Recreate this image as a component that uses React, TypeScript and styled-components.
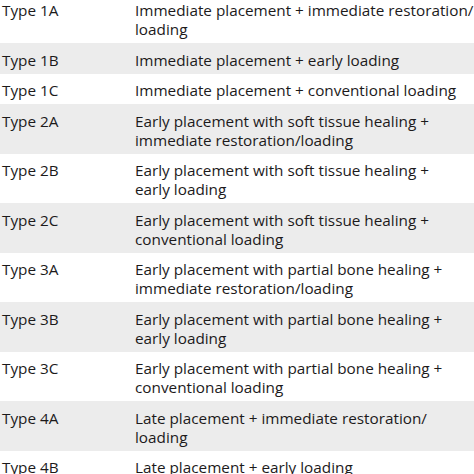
import React from "react";
import styled, { createGlobalStyle } from "styled-components";

const rows: { type: string; lines: string[] }[] = [
  { type: "Type 1A", lines: ["Immediate placement + immediate restoration/", "loading"] },
  { type: "Type 1B", lines: ["Immediate placement + early loading"] },
  { type: "Type 1C", lines: ["Immediate placement + conventional loading"] },
  { type: "Type 2A", lines: ["Early placement with soft tissue healing +", "immediate restoration/loading"] },
  { type: "Type 2B", lines: ["Early placement with soft tissue healing +", "early loading"] },
  { type: "Type 2C", lines: ["Early placement with soft tissue healing +", "conventional loading"] },
  { type: "Type 3A", lines: ["Early placement with partial bone healing +", "immediate restoration/loading"] },
  { type: "Type 3B", lines: ["Early placement with partial bone healing +", "early loading"] },
  { type: "Type 3C", lines: ["Early placement with partial bone healing +", "conventional loading"] },
  { type: "Type 4A", lines: ["Late placement + immediate restoration/", "loading"] },
  { type: "Type 4B", lines: ["Late placement + early loading"] },
];

const App = () => {
  return (
    <>
      <GlobalStyle />
      <Table>
        {rows.map((row, i) => (
          <Row key={row.type} $shaded={i % 2 === 1}>
            <TypeCell>{row.type}</TypeCell>
            <DescCell>
              {row.lines.map((line) => (
                <Line key={line}>{line}</Line>
              ))}
            </DescCell>
          </Row>
        ))}
      </Table>
    </>
  );
};

export default App;

const GlobalStyle = createGlobalStyle`
  html, body {
    margin: 0;
    padding: 0;
    background: #ffffff;
    overflow: hidden;
  }
`;

const Table = styled.div`
  display: flex;
  flex-direction: column;
  width: 474px;
  margin-top: -6.5px;
  font-family: "Open Sans", "Noto Sans", sans-serif;
  font-size: 15.3px;
  line-height: 19px;
  color: #1c1a1b;
`;

const Row = styled.div<{ $shaded: boolean }>`
  display: grid;
  grid-template-columns: 133px 1fr;
  padding: 7.5px 0 4px 2px;
  background: ${(p) => (p.$shaded ? "#ececec" : "#ffffff")};
`;

const TypeCell = styled.div`
  white-space: nowrap;
`;

const DescCell = styled.div`
  display: flex;
  flex-direction: column;
`;

const Line = styled.span`
  white-space: nowrap;
`;
